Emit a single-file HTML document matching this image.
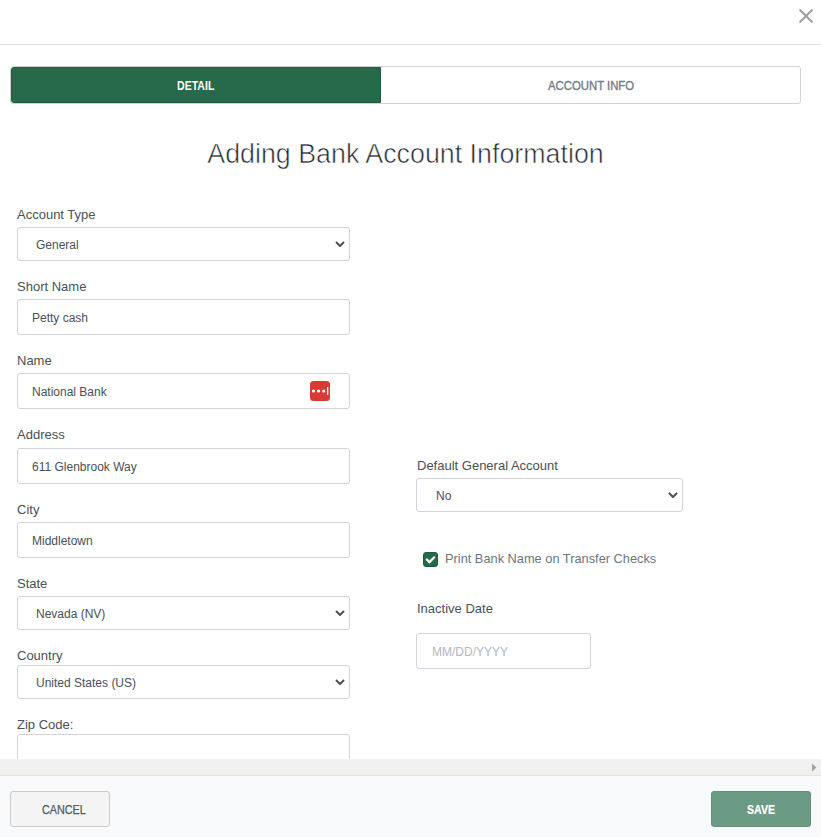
<!DOCTYPE html>
<html><head><meta charset="utf-8">
<style>
*{box-sizing:border-box;margin:0;padding:0}
html,body{width:821px;height:837px;overflow:hidden;background:#fff;font-family:"Liberation Sans",sans-serif;color:#495057}
.a{position:absolute}
.hdr{left:0;top:44px;width:821px;height:1px;background:#dee2e6}
.tabs{left:10px;top:66px;width:791px;height:38px;border:1px solid #d2d2d2;border-radius:3px;background:#fff}
.tab1{left:11px;top:67px;width:370px;height:36px;background:#266a4b;border:1px solid #1b5e3b;border-radius:3px 0 0 3px}
.tt{font-size:12px;font-weight:bold;line-height:12px;white-space:nowrap}
.title{left:10px;width:791px;text-align:center;font-size:28.2px;line-height:28px;color:#282d32;white-space:nowrap;-webkit-text-stroke:0.6px #fff;transform:scaleX(0.951);transform-origin:50% 0}
.lbl{font-size:13px;line-height:13px;white-space:nowrap;color:#495057}
.box{border:1px solid #ced4da;border-radius:3px;background:#fff}
.val{font-size:12px;line-height:12px;white-space:nowrap;color:#495057}
.chev{width:10px;height:6px}
</style></head><body>
<div class="a hdr"></div>
<svg class="a" style="left:798px;top:8px" width="16" height="16" viewBox="0 0 16 16"><path d="M1.5 1.5L14.5 14.5M14.5 1.5L1.5 14.5" stroke="#9c9c9c" stroke-width="1.9" fill="none"/></svg>

<div class="a tabs"></div>
<div class="a tab1"></div>
<div class="a tt" style="left:177px;top:80px;color:#fff;transform:scaleX(0.88);transform-origin:0 0">DETAIL</div>
<div class="a tt" style="left:548px;top:80px;color:#737b83;font-weight:normal;-webkit-text-stroke:0.35px #737b83;transform:scaleX(0.945);transform-origin:0 0">ACCOUNT INFO</div>

<div class="a title" style="top:139px">Adding Bank Account Information</div>

<!-- left column -->
<div class="a lbl" style="left:17px;top:208px">Account Type</div>
<div class="a box" style="left:17px;top:227px;width:333px;height:34px"></div>
<div class="a val" style="left:36px;top:239px">General</div>
<svg class="a chev" style="left:335px;top:241px" viewBox="0 0 10 6"><path d="M1 1L5 5L9 1" stroke="#495057" stroke-width="2" fill="none"/></svg>

<div class="a lbl" style="left:17px;top:280px">Short Name</div>
<div class="a box" style="left:17px;top:299px;width:333px;height:36px"></div>
<div class="a val" style="left:32px;top:312px">Petty cash</div>

<div class="a lbl" style="left:17px;top:354px">Name</div>
<div class="a box" style="left:17px;top:373px;width:333px;height:36px"></div>
<div class="a val" style="left:32px;top:386px">National Bank</div>
<svg class="a" style="left:310px;top:381px" width="20" height="20" viewBox="0 0 20 20"><rect x="0" y="0" width="20" height="20" rx="3.5" fill="#d63b35"/><circle cx="3.5" cy="10" r="1.6" fill="#fff"/><circle cx="8.6" cy="10" r="1.6" fill="#fff"/><circle cx="13.7" cy="10" r="1.6" fill="#fff"/><rect x="17" y="6" width="1.3" height="8" fill="#fff"/></svg>

<div class="a lbl" style="left:17px;top:428px">Address</div>
<div class="a box" style="left:17px;top:448px;width:333px;height:36px"></div>
<div class="a val" style="left:32px;top:461px">611 Glenbrook Way</div>

<div class="a lbl" style="left:17px;top:503px">City</div>
<div class="a box" style="left:17px;top:522px;width:333px;height:36px"></div>
<div class="a val" style="left:32px;top:535px">Middletown</div>

<div class="a lbl" style="left:17px;top:577px">State</div>
<div class="a box" style="left:17px;top:596px;width:333px;height:34px"></div>
<div class="a val" style="left:36px;top:608px">Nevada (NV)</div>
<svg class="a chev" style="left:335px;top:610px" viewBox="0 0 10 6"><path d="M1 1L5 5L9 1" stroke="#495057" stroke-width="2" fill="none"/></svg>

<div class="a lbl" style="left:17px;top:649px">Country</div>
<div class="a box" style="left:17px;top:665px;width:333px;height:34px"></div>
<div class="a val" style="left:36px;top:677px">United States (US)</div>
<svg class="a chev" style="left:335px;top:679px" viewBox="0 0 10 6"><path d="M1 1L5 5L9 1" stroke="#495057" stroke-width="2" fill="none"/></svg>

<div class="a lbl" style="left:17px;top:718px">Zip Code:</div>
<div class="a box" style="left:17px;top:734px;width:333px;height:36px"></div>

<!-- right column -->
<div class="a lbl" style="left:417px;top:459px">Default General Account</div>
<div class="a box" style="left:416px;top:478px;width:267px;height:34px"></div>
<div class="a val" style="left:436px;top:490px">No</div>
<svg class="a chev" style="left:668px;top:492px" viewBox="0 0 10 6"><path d="M1 1L5 5L9 1" stroke="#495057" stroke-width="2" fill="none"/></svg>

<div class="a" style="left:423px;top:552px;width:15px;height:15px;background:#266a4b;border:1px solid #1b5e3b;border-radius:3px"></div>
<svg class="a" style="left:423px;top:552px" width="15" height="15" viewBox="0 0 15 15"><path d="M3.2 6.9L6.5 10.1L11.8 4.7" stroke="#fff" stroke-width="2.2" fill="none"/></svg>
<div class="a lbl" style="left:445px;top:552px;color:#6c757d;font-size:12.8px">Print Bank Name on Transfer Checks</div>

<div class="a lbl" style="left:417px;top:602px">Inactive Date</div>
<div class="a box" style="left:416px;top:633px;width:175px;height:36px"></div>
<div class="a val" style="left:432px;top:646px;color:#b0b6bd">MM/DD/YYYY</div>

<!-- scrollbar + footer -->
<div class="a" style="left:0;top:759px;width:821px;height:16px;background:#f1f1f1"></div>
<svg class="a" style="left:811px;top:763px" width="7" height="9" viewBox="0 0 7 9"><path d="M1 0.5L5.5 4.5L1 8.5Z" fill="#a3a3a3"/></svg>
<div class="a" style="left:0;top:775px;width:821px;height:1px;background:#dee2e6"></div>
<div class="a" style="left:0;top:776px;width:821px;height:61px;background:#f8f9fa"></div>
<div class="a" style="left:10px;top:791px;width:100px;height:36px;background:#f4f4f4;border:1px solid #cbcbcb;border-radius:3px"></div>
<div class="a val" style="left:42px;top:804px;font-size:12.5px;color:#50575e;-webkit-text-stroke:0.25px #50575e;transform:scaleX(0.86);transform-origin:0 0">CANCEL</div>
<div class="a" style="left:711px;top:791px;width:100px;height:36px;background:#6b9a85;border:1px solid #5f9079;border-radius:3px"></div>
<div class="a tt" style="left:747px;top:804px;color:#fff;-webkit-text-stroke:0.2px #fff;transform:scaleX(0.885);transform-origin:0 0">SAVE</div>
</body></html>
